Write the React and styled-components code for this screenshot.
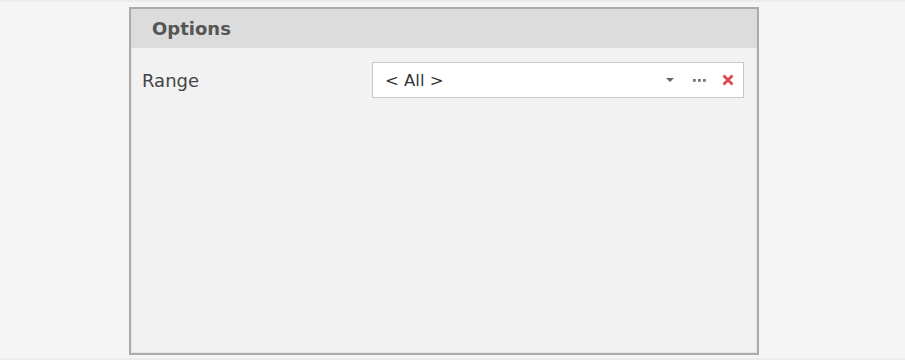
import React from "react";
import styled, { createGlobalStyle } from "styled-components";

const GlobalStyle = createGlobalStyle`
  html, body {
    margin: 0;
    padding: 0;
    background: #f5f5f5;
  }
  body {
    font-family: "DejaVu Sans", "Noto Sans", sans-serif;
  }
`;

const Page = styled.div`
  width: 905px;
  height: 360px;
  box-sizing: border-box;
  border-top: 2px solid #ebebeb;
  border-bottom: 2px solid #ebebeb;
  padding: 5px 0 0 129px;
`;

const Panel = styled.section`
  width: 630px;
  height: 348px;
  box-sizing: border-box;
  border: 2px solid #ababab;
  background: #f2f2f2;
  box-shadow: inset 0 0 0 1px #e6e6e6;
  display: flex;
  flex-direction: column;
`;

const Header = styled.div`
  height: 39px;
  background: #dcdcdc;
  display: flex;
  align-items: center;
  padding-left: 21px;
  font-weight: bold;
  font-size: 18px;
  color: #555;
`;

const Row = styled.div`
  display: flex;
  align-items: center;
  padding: 14px 13px 0 11px;
`;

const Label = styled.span`
  width: 230px;
  font-size: 18px;
  color: #444;
`;

const Editor = styled.div`
  flex: 1;
  height: 36px;
  box-sizing: border-box;
  border: 1px solid #c8c8c8;
  background: #fff;
  display: flex;
  align-items: center;
  padding: 0 8px 0 12px;
`;

const Value = styled.span`
  flex: 1;
  font-size: 16.5px;
  color: #333;
`;

const Buttons = styled.div`
  display: flex;
  align-items: center;
  gap: 15px;
`;

const IconButton = styled.span`
  width: 14px;
  height: 14px;
  display: flex;
  align-items: center;
  justify-content: center;
`;

export default function App() {
  return (
    <>
      <GlobalStyle />
      <Page>
        <Panel>
          <Header>Options</Header>
          <Row>
            <Label>Range</Label>
            <Editor>
              <Value>&lt; All &gt;</Value>
              <Buttons>
                <IconButton>
                  <svg width="10" height="6" viewBox="0 0 10 6">
                    <path d="M1 1h8L5 5z" fill="#666" />
                  </svg>
                </IconButton>
                <IconButton>
                  <svg width="13" height="3" viewBox="0 0 13 3">
                    <rect x="0" y="0" width="2.8" height="2.8" fill="#777" />
                    <rect x="5" y="0" width="2.8" height="2.8" fill="#777" />
                    <rect x="10" y="0" width="2.8" height="2.8" fill="#777" />
                  </svg>
                </IconButton>
                <IconButton>
                  <svg width="12" height="12" viewBox="0 0 12 12">
                    <path d="M1.5 1.5l9 9M10.5 1.5l-9 9" stroke="#e0434d" strokeWidth="2.6" />
                  </svg>
                </IconButton>
              </Buttons>
            </Editor>
          </Row>
        </Panel>
      </Page>
    </>
  );
}
